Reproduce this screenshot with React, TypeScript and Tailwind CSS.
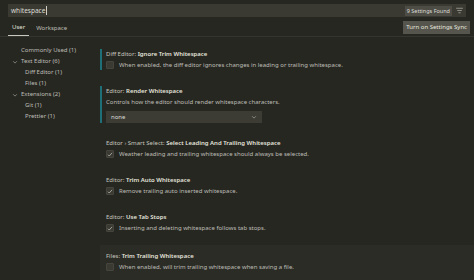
import React from "react";

const Check = ({ checked }: { checked: boolean }) => (
  <div className="w-[8px] h-[8px] bg-[#3a3a33] border border-[#45453e] rounded-[1px] flex items-center justify-center shrink-0">
    {checked && (
      <svg width="7" height="7" viewBox="0 0 16 16">
        <path d="M2.5 8.5 L6 12 L13.5 3.5" fill="none" stroke="#d0d0c8" strokeWidth="1.8" />
      </svg>
    )}
  </div>
);

const Chevron = () => (
  <svg width="6" height="6" viewBox="0 0 16 16" className="shrink-0">
    <path d="M3 6 L8 11 L13 6" fill="none" stroke="#b8b8b0" strokeWidth="1.6" />
  </svg>
);

function Setting({
  prefix,
  title,
  desc,
  checkbox,
  checked,
  border,
  children,
}: {
  prefix: string;
  title: string;
  desc: string;
  checkbox?: boolean;
  checked?: boolean;
  border?: boolean;
  children?: React.ReactNode;
}) {
  return (
    <div className={`pl-[4px] border-l-2 ${border ? "border-[#1f6f78]" : "border-transparent"}`}>
      <div className="leading-[10px] h-[10px] whitespace-nowrap">
        <span className="text-[#c6c6be]">{prefix}</span>
        <span className="text-[#e4e4dc] font-semibold">{title}</span>
      </div>
      <div className="mt-[1px] h-[10px] leading-[10px] flex items-center gap-[5px] whitespace-nowrap text-[#bdbdb5]">
        {checkbox && <Check checked={!!checked} />}
        <span>{desc}</span>
      </div>
      {children}
    </div>
  );
}

export default function App() {
  return (
    <div
      className="w-[474px] h-[280px] bg-[#272722] overflow-hidden text-[6px] text-[#c8c8c0]"
      style={{ fontFamily: '"Noto Sans", "Open Sans", sans-serif' }}
    >
      {/* search */}
      <div className="pt-[4px] px-[8px]">
        <div className="h-[13px] bg-[#3a3a33] flex items-center pl-[3px] pr-[2px]">
          <span className="text-[#dcdcd4] text-[6.5px]">whitespace</span>
          <span className="w-[1px] h-[9px] bg-[#cfcfc7] ml-[1px]" />
          <div className="flex-1" />
          <span className="bg-[#4d4d46] text-[#dcdcd4] px-[2px] h-[10px] leading-[10px] text-[5.5px]">9 Settings Found</span>
          <svg width="9" height="9" viewBox="0 0 16 16" className="ml-[3px]">
            <path d="M2 4 H14 M4 8 H12 M6 12 H10" stroke="#9a9a92" strokeWidth="1.6" />
          </svg>
        </div>
      </div>
      {/* tabs */}
      <div className="flex items-end justify-between px-[8px] border-b border-[#35352f] h-[20px]">
        <div className="flex gap-[7px] h-full items-center">
          <div className="h-full flex items-center border-b border-[#c8c8c0] px-[4px] text-[#e0e0d8] pt-[3px]">User</div>
          <div className="flex items-center text-[#bdbdb5] pt-[3px]">Workspace</div>
        </div>
        <div className="self-center mt-[1px] -mr-[4px] bg-[#55554d] text-[#e6e6de] h-[13px] leading-[13px] px-[3px] whitespace-nowrap">
          Turn on Settings Sync
        </div>
      </div>
      {/* body */}
      <div className="flex">
        <div className="w-[100px] pt-[8px] text-[#bdbdb5] shrink-0">
          <div className="h-[11px] leading-[11px] pl-[21px]">Commonly Used (1)</div>
          <div className="h-[11px] leading-[11px] pl-[12px] flex items-center gap-[3px]">
            <Chevron />
            <span>Text Editor (6)</span>
          </div>
          <div className="h-[11px] leading-[11px] pl-[25px]">Diff Editor (1)</div>
          <div className="h-[11px] leading-[11px] pl-[25px]">Files (1)</div>
          <div className="h-[11px] leading-[11px] pl-[12px] flex items-center gap-[3px]">
            <Chevron />
            <span>Extensions (2)</span>
          </div>
          <div className="h-[11px] leading-[11px] pl-[25px]">Git (1)</div>
          <div className="h-[11px] leading-[11px] pl-[25px]">Prettier (1)</div>
        </div>
        <div className="flex-1 pt-[12px] flex flex-col">
          <Setting
            prefix="Diff Editor: "
            title="Ignore Trim Whitespace"
            desc="When enabled, the diff editor ignores changes in leading or trailing whitespace."
            checkbox
            border
          />
          <div className="mt-[16px]">
            <Setting
              prefix="Editor: "
              title="Render Whitespace"
              desc="Controls how the editor should render whitespace characters."
              border
            >
              <div className="mt-[4px] w-[156px] h-[12px] bg-[#3c3c35] flex items-center justify-between px-[5px] text-[#dcdcd4]">
                <span>none</span>
                <Chevron />
              </div>
            </Setting>
          </div>
          <div className="mt-[15px]">
            <Setting
              prefix="Editor › Smart Select: "
              title="Select Leading And Trailing Whitespace"
              desc="Weather leading and trailing whitespace should always be selected."
              checkbox
              checked
            />
          </div>
          <div className="mt-[16px]">
            <Setting
              prefix="Editor: "
              title="Trim Auto Whitespace"
              desc="Remove trailing auto inserted whitespace."
              checkbox
              checked
            />
          </div>
          <div className="mt-[16px]">
            <Setting
              prefix="Editor: "
              title="Use Tab Stops"
              desc="Inserting and deleting whitespace follows tab stops."
              checkbox
              checked
            />
          </div>
          <div className="mt-[12px] bg-[#2c2c27] pt-[6px] pb-[20px]">
            <Setting
              prefix="Files: "
              title="Trim Trailing Whitespace"
              desc="When enabled, will trim trailing whitespace when saving a file."
              checkbox
            />
          </div>
        </div>
      </div>
    </div>
  );
}
